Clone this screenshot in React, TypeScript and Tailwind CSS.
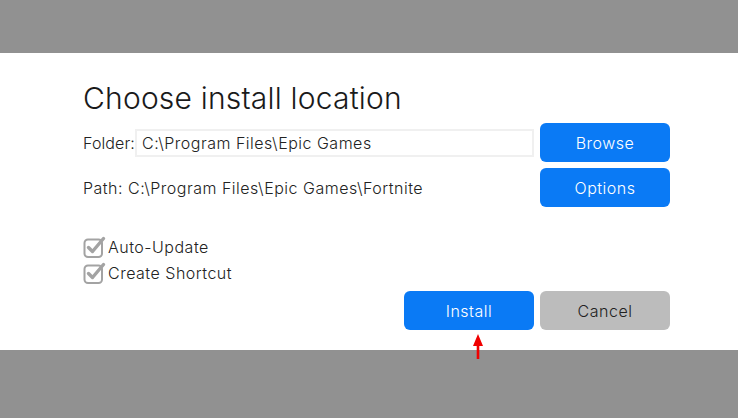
import React from 'react';

function CheckIcon() {
  return (
    <svg width="23" height="22" viewBox="0 0 23 22" className="shrink-0">
      <rect x="1.5" y="3.5" width="17.5" height="17.5" rx="3.5" fill="none" stroke="#a3a3a3" strokeWidth="2" />
      <path d="M5.5 11.5 L9.5 15.5 L20.5 2.5" fill="none" stroke="#a3a3a3" strokeWidth="3.4" strokeLinecap="round" strokeLinejoin="round" />
    </svg>
  );
}

export default function App() {
  const font = { fontFamily: 'Inter, "Liberation Sans", sans-serif' };

  return (
    <div className="w-[738px] h-[418px] bg-[#919191] flex flex-col" style={font}>
      <div className="h-[53px]" />
      <div className="h-[297px] bg-white pl-[83px] pr-[68px] pt-[27px] relative">
        <h1 className="text-[30px] leading-[36px] font-light text-[#1a1a1a] tracking-[0.2px]">Choose install location</h1>

        <div className="mt-[7px] flex items-center gap-[6px]">
          <div className="flex-1 flex items-center text-[16px] font-light text-[#222] tracking-[0.5px]">
            <span className="w-[52px] tracking-[0.1px]">Folder:</span>
            <div className="flex-1 h-[28px] border-2 border-[#f0f0f0] flex items-center pl-[5px]">
              C:\Program Files\Epic Games
            </div>
          </div>
          <button className="w-[130px] h-[39px] rounded-[6px] bg-[#0a7af5] text-white text-[16px] font-light tracking-[0.5px]">Browse</button>
        </div>

        <div className="mt-[6px] flex items-center gap-[6px]">
          <div className="flex-1 text-[16px] font-light text-[#222] tracking-[0.5px]">Path: C:\Program Files\Epic Games\Fortnite</div>
          <button className="w-[130px] h-[39px] rounded-[6px] bg-[#0a7af5] text-white text-[16px] font-light tracking-[0.5px]">Options</button>
        </div>

        <div className="mt-[29px] flex flex-col gap-[4px] text-[16px] font-light text-[#222] tracking-[0.5px]">
          <label className="flex items-center gap-[2px] h-[22px]">
            <CheckIcon />
            <span>Auto-Update</span>
          </label>
          <label className="flex items-center gap-[2px] h-[22px]">
            <CheckIcon />
            <span>Create Shortcut</span>
          </label>
        </div>

        <div className="mt-[7px] flex justify-end gap-[6px]">
          <button className="w-[130px] h-[39px] rounded-[6px] bg-[#0a7af5] text-white text-[16px] font-light tracking-[0.5px]">Install</button>
          <button className="w-[130px] h-[39px] rounded-[6px] bg-[#bcbcbc] text-[#222] text-[16px] font-light tracking-[0.5px]">Cancel</button>
        </div>

        <svg width="12" height="26" viewBox="0 0 12 26" className="absolute left-[472px] top-[281px]">
          <path d="M6 0 L11 12 L7.3 12 L7.3 25 L4.7 25 L4.7 12 L1 12 Z" fill="#f00000" />
        </svg>
      </div>
      <div className="flex-1" />
    </div>
  );
}
